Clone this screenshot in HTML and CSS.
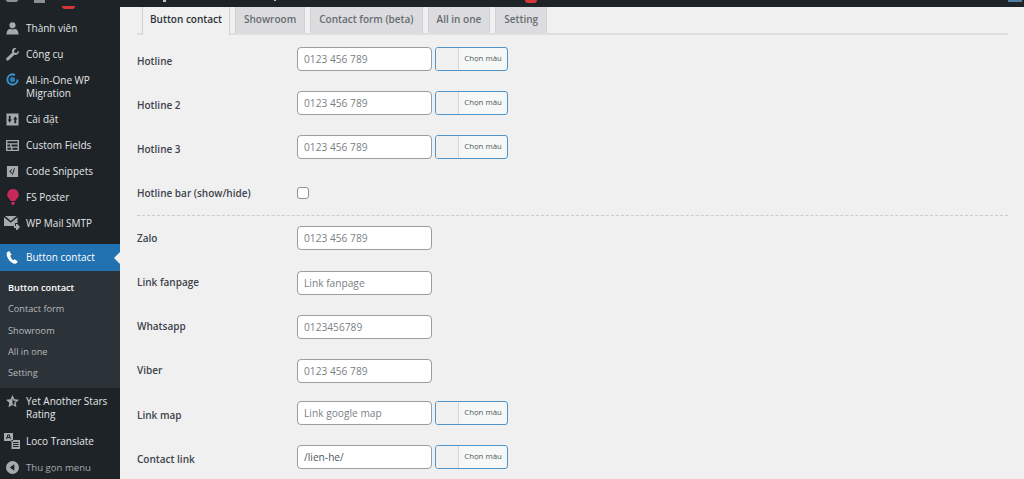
FILE: index.html
```html
<!DOCTYPE html>
<html lang="vi">
<head>
<meta charset="utf-8">
<title>Button contact</title>
<link rel="stylesheet" href="styles.css">
</head>
<body>
<div class="topbar">
  <span class="tb-dot tb-dot-a"></span>
  <span class="tb-dot tb-dot-b"></span>
  <span class="tb-badge"></span>
  <span class="tb-mark"></span>
</div>
<div class="shell">
  <nav class="sidebar">
    <div class="clip-row">
      <span class="clip clip-a"></span><span class="clip clip-b"></span><span class="clip clip-c"></span>
    </div>
    <a class="item"><span class="ico"><svg viewBox="0 0 14 14"><circle cx="7" cy="3.600" r="3.300"/><path d="M0.500 13.500c0-3.600 1.600-5.800 3.600-6.300 1.600 1 4.200 1 5.800 0 2 .5 3.600 2.700 3.600 6.300z"/></svg></span><span>Thành viên</span></a>
    <a class="item"><span class="ico"><svg viewBox="0 0 14 14"><path d="M13.800 3l-2.600 2.500-2-.5-.6-2L11.100.4C9.400-.3 7.400.4 6.700 2.100c-.4.900-.3 1.800.1 2.700L.7 10.900c-.7.700-.7 1.700 0 2.300.6.600 1.600.6 2.200 0l6.100-6c1.700.7 3.700 0 4.500-1.700.4-.8.500-1.700.3-2.500z"/></svg></span><span>Công cụ</span></a>
    <a class="item item-two"><span class="ico"><svg viewBox="0 0 14 14"><circle cx="7" cy="7" r="5.500" fill="none" stroke="#3b8fc4" stroke-width="2.200" stroke-dasharray="28 6"/><circle cx="7" cy="7" r="2.800" fill="#2b7fb8"/></svg></span><span>All-in-One WP<br>Migration</span></a>
    <a class="item"><span class="ico"><svg viewBox="0 0 14 14"><path fill-rule="evenodd" d="M.5.500h13v13H.5zM3 3v4H1.800l2.200 3.500L6.200 7H5V3zm6 8V7H7.800L10 3.500 12.200 7H11v4z"/></svg></span><span>Cài đặt</span></a>
    <a class="item"><span class="ico"><svg viewBox="0 0 14 14"><path fill-rule="evenodd" d="M0 1h14v12H0zM1.500 2.500v2h11v-2zm0 3.500v2h3V6zm4.500 0v2h6.500V6zM1.500 9.500v2h4v-2zm5.500 0v2h5.500v-2z"/></svg></span><span>Custom Fields</span></a>
    <a class="item"><span class="ico"><svg viewBox="0 0 14 14"><path fill-rule="evenodd" d="M1 1h12v12H1zM6 4.500L3.500 7 6 9.500l.7-.7L5 7l1.700-1.800zM8.500 3.500l-2 7h1l2-7z"/></svg></span><span>Code Snippets</span></a>
    <a class="item"><span class="ico ico-pin"><svg viewBox="0 0 12 16"><path d="M6 0a5.700 5.700 0 0 0-3.400 10.300c.7.600 1 1.200 1.100 1.700h4.600c.1-.5.400-1.100 1.100-1.700A5.700 5.700 0 0 0 6 0zM4 13h4l-1 3H5z"/></svg></span><span>FS Poster</span></a>
    <a class="item"><span class="ico ico-wide"><svg viewBox="0 0 16 16"><path d="M1 1h11.500L6.800 6zM0 2.300l6.800 5.500 6.700-5.500V8h-2.500v3H0zM12 9h1.300l2.700 3-2.700 3H12v-2h-2v-2h2z"/></svg></span><span>WP Mail SMTP</span></a>
    <a class="item item-active"><span class="ico"><svg viewBox="0 0 14 14"><path d="M3.500 0L1.500 1.200C.6 2 .5 4 1.200 6c1.200 3.400 3.700 6.200 6.800 7.400 1.600.6 2.800.4 3.600-.4l1.100-1.600-3.400-2.600-1.600 1.200C6.500 9.200 5 7 4.500 5.200L6 4z"/></svg></span><span>Button contact</span></a>
    <div class="submenu">
      <a class="sub sub-on">Button contact</a>
      <a class="sub">Contact form</a>
      <a class="sub">Showroom</a>
      <a class="sub">All in one</a>
      <a class="sub">Setting</a>
    </div>
    <a class="item item-two item-stars"><span class="ico"><svg viewBox="0 0 14 14"><path fill-rule="evenodd" d="M7 0l2.100 4.500 4.900.6-3.600 3.300.9 4.900L7 10.900l-4.300 2.400.9-4.900L0 5.100l4.900-.6zM7 3.500v6.100l2.300 1.200-.5-2.600 1.900-1.700-2.500-.3z"/></svg></span><span>Yet Another Stars<br>Rating</span></a>
    <a class="item"><span class="ico ico-wide"><svg viewBox="0 0 16 16"><path fill-rule="evenodd" d="M0 0h9v8H0zM3.500 1.500L2 6h1l.3-1h2.400l.3 1h1L5.500 1.500zM3.700 4l.8-2 .8 2zM7.500 7H16v9H7.500zM9 9v1h5.500V9zm0 2v1h5.500v-1zm0 2v1h5.500v-1z"/></svg></span><span>Loco Translate</span></a>
    <a class="item item-fold"><span class="ico"><svg viewBox="0 0 14 14"><path fill-rule="evenodd" d="M7 0a7 7 0 1 1 0 14A7 7 0 0 1 7 0zm2 3.500L4 7l5 3.500z"/></svg></span><span>Thu gọn menu</span></a>
  </nav>
  <main class="main">
    <div class="tabs">
      <a class="tab tab-on">Button contact</a>
      <a class="tab">Showroom</a>
      <a class="tab">Contact form (beta)</a>
      <a class="tab">All in one</a>
      <a class="tab">Setting</a>
    </div>
    <form class="form">
      <div class="row row-color"><label class="lbl">Hotline</label><span class="input ph">0123 456 789</span><span class="color"><span class="swatch"></span><span class="pick">Chọn màu</span></span></div>
      <div class="row row-color"><label class="lbl">Hotline 2</label><span class="input ph">0123 456 789</span><span class="color"><span class="swatch"></span><span class="pick">Chọn màu</span></span></div>
      <div class="row row-color"><label class="lbl">Hotline 3</label><span class="input ph">0123 456 789</span><span class="color"><span class="swatch"></span><span class="pick">Chọn màu</span></span></div>
      <div class="row"><label class="lbl">Hotline bar (show/hide)</label><span class="check"></span></div>
      <div class="rule"></div>
      <div class="row"><label class="lbl">Zalo</label><span class="input ph">0123 456 789</span></div>
      <div class="row"><label class="lbl">Link fanpage</label><span class="input ph">Link fanpage</span></div>
      <div class="row"><label class="lbl">Whatsapp</label><span class="input ph">0123456789</span></div>
      <div class="row"><label class="lbl">Viber</label><span class="input ph">0123 456 789</span></div>
      <div class="row row-color"><label class="lbl">Link map</label><span class="input ph">Link google map</span><span class="color"><span class="swatch"></span><span class="pick">Chọn màu</span></span></div>
      <div class="row row-color"><label class="lbl">Contact link</label><span class="input val">/lien-he/</span><span class="color"><span class="swatch"></span><span class="pick">Chọn màu</span></span></div>
    </form>
  </main>
</div>
</body>
</html>
```
FILE: styles.css
```css
* { box-sizing: border-box; }
html, body { margin: 0; height: 479px; overflow: hidden; }
body {
  background: #f0f0f1;
  font-family: "Open Sans", "Noto Sans", sans-serif;
  color: #3c434a;
  font-size: 10px;
}
.topbar {
  height: 7px;
  margin-left: 120px;
  background: #1d2327;
  position: relative;
  overflow: hidden;
}
.tb-dot { position: absolute; top: 0; width: 3px; height: 2px; background: #c3c4c7; }
.tb-dot-a { left: 43px; }
.tb-dot-b { left: 154px; width: 2px; height: 1px; }
.tb-badge { position: absolute; left: 405px; top: -3px; width: 12px; height: 6px; border-radius: 6px; background: #d63638; }
.tb-mark { position: absolute; right: 2px; top: 0; width: 14px; height: 2px; background: #4f7da3; }
.shell { display: flex; height: 472px; }
.sidebar {
  width: 120px;
  flex: none;
  margin-top: -7px;
  height: 479px;
  background: #1d2327;
  color: #e4e6e8;
  display: flex;
  flex-direction: column;
  overflow: hidden;
}
.clip-row { height: 15px; position: relative; flex: none; }
.clip { position: absolute; display: block; }
.clip-a { left: 6px; top: 0; width: 12px; height: 2px; border-radius: 0 0 6px 6px; background: #8c8f94; }
.clip-b { left: 34px; top: 0; width: 11px; height: 3px; background: #8c8f94; }
.clip-c { left: 62px; top: 6px; width: 13px; height: 3px; border-radius: 0 0 7px 7px; background: #d63638; }
.item {
  height: 26px;
  flex: none;
  display: flex;
  align-items: center;
  gap: 7px;
  padding-left: 6px;
  font-size: 10px;
  line-height: 13px;
}
.item-two { height: 39px; }
.item-two .ico { align-self: flex-start; margin-top: 6px; }
.item-stars { height: 40px; }
.item-stars .ico { margin-top: 7px; }
.ico { width: 13px; height: 13px; flex: none; display: flex; }
.ico svg { width: 100%; height: 100%; fill: #a7aaad; display: block; }
.ico-wide { width: 16px; height: 16px; margin-left: -2px; margin-right: -1px; }
.ico-pin { width: 12px; height: 16px; margin-left: 1px; }
.ico-pin svg { fill: #c8285a; }
.item-active {
  height: 27px;
  margin-top: 8px;
  background: #2271b1;
  color: #fff;
  position: relative;
}
.item-active .ico svg { fill: #fff; }
.item-active::after {
  content: "";
  position: absolute;
  right: 0;
  top: 8px;
  border: 6px solid transparent;
  border-left: 0;
  border-right-color: #f0f0f1;
}
.submenu {
  height: 117px;
  flex: none;
  background: #2c3338;
  padding-top: 6px;
  display: flex;
  flex-direction: column;
}
.sub {
  height: 21.300px;
  display: flex;
  align-items: center;
  padding-left: 8px;
  font-size: 9.200px;
  color: #b6b9bc;
}
.sub-on { color: #fff; font-weight: 600; }
.item-fold { color: #a7aaad; font-size: 9.600px; }
.main { flex: 1; min-width: 0; padding: 0 16px 0 17px; }
.tabs {
  height: 28px;
  display: flex;
  gap: 5px;
  padding-left: 5px;
  border-bottom: 2px solid #dedfe0;
}
.tab {
  height: 26px;
  padding: 4px 8px 0;
  background: #dcdcde;
  border: 1px solid #d0d1d4;
  border-top: 0;
  border-bottom: 0;
  color: #666c72;
  font-size: 10px;
  font-weight: 600;
  line-height: 17px;
}
.tab-on {
  background: #f0f0f1;
  color: #2c3338;
  height: 28px;
  padding: 4px 7px 0;
}
.form { display: flex; flex-direction: column; padding-top: 3.500px; }
.row {
  height: 44.200px;
  flex: none;
  display: flex;
  align-items: center;
}
.lbl {
  width: 160px;
  flex: none;
  font-weight: 600;
  font-size: 10px;
  color: #3c434a;
}
.rule ~ .row .lbl { margin-bottom: 1px; }
.input {
  width: 135px;
  height: 24px;
  flex: none;
  background: #fff;
  border: 1px solid #9a9da1;
  border-radius: 4px;
  padding-left: 6px;
  line-height: 22px;
  font-size: 10.200px;
  color: #7a7f84;
}
.row-color .input { margin-bottom: 4px; }
.val { color: #50575e; }
.color {
  width: 73px;
  height: 24px;
  margin-left: 3px;
  margin-bottom: 4px;
  flex: none;
  display: flex;
  border: 1px solid #4f94c9;
  border-radius: 3px;
  background: #f6f7f7;
  overflow: hidden;
}
.swatch { width: 23px; border-right: 1px solid #d5d6d8; background: #f0f0f1; }
.pick {
  flex: 1;
  text-align: center;
  line-height: 21px;
  font-size: 7.800px;
  color: #50575e;
}
.check {
  width: 12px;
  height: 12px;
  border: 1px solid #8c8f94;
  border-radius: 3px;
  background: #fff;
}
.rule { border-top: 1px dashed #c9cbce; }
```
